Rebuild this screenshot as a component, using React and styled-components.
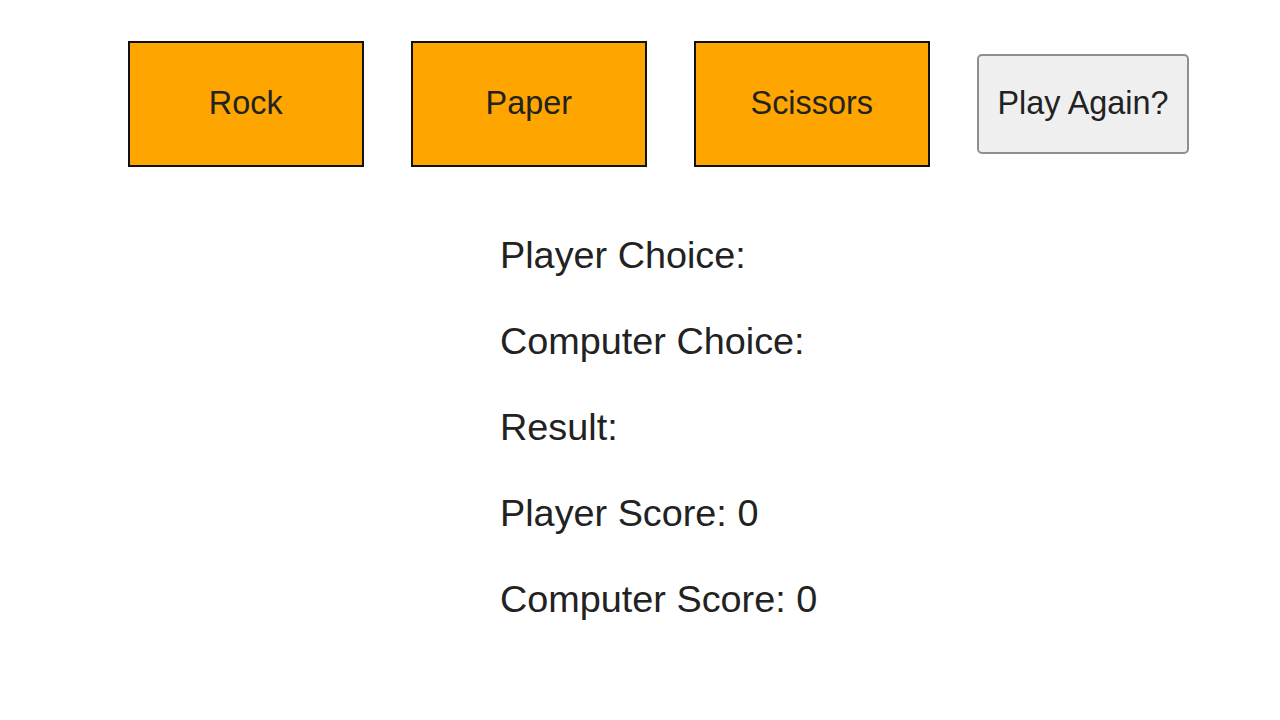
import React, { useState } from "react";
import styled, { createGlobalStyle } from "styled-components";

const GlobalStyle = createGlobalStyle`
  html, body {
    margin: 0;
    padding: 0;
    background: #ffffff;
    font-family: "Liberation Sans", Arial, sans-serif;
    color: #222;
  }
`;

const choices = ["Rock", "Paper", "Scissors"];

const App = () => {
  const [playerChoice, setPlayerChoice] = useState("");
  const [computerChoice, setComputerChoice] = useState("");
  const [result, setResult] = useState("");
  const [playerScore, setPlayerScore] = useState(0);
  const [computerScore, setComputerScore] = useState(0);

  const play = (choice) => {
    const comp = choices[Math.floor(Math.random() * 3)];
    setPlayerChoice(choice);
    setComputerChoice(comp);
    if (comp === choice) {
      setResult("Tie");
      return;
    }
    const wins =
      (choice === "Rock" && comp === "Scissors") ||
      (choice === "Paper" && comp === "Rock") ||
      (choice === "Scissors" && comp === "Paper");
    if (wins) {
      setResult("You win");
      setPlayerScore((s) => s + 1);
    } else {
      setResult("You lose");
      setComputerScore((s) => s + 1);
    }
  };

  const reset = () => {
    setPlayerChoice("");
    setComputerChoice("");
    setResult("");
    setPlayerScore(0);
    setComputerScore(0);
  };

  return (
    <>
      <GlobalStyle />
      <Container>
        <ButtonRow>
          {choices.map((c) => (
            <ChoiceButton key={c} onClick={() => play(c)}>
              {c}
            </ChoiceButton>
          ))}
          <ResetButton onClick={reset}>Play Again?</ResetButton>
        </ButtonRow>
        <Results>
          <Line>Player Choice: {playerChoice}</Line>
          <Line>Computer Choice: {computerChoice}</Line>
          <Line>Result: {result}</Line>
          <Line>Player Score: {playerScore}</Line>
          <Line>Computer Score: {computerScore}</Line>
        </Results>
      </Container>
    </>
  );
};

const Container = styled.div`
  width: 1280px;
  height: 720px;
  padding-top: 41px;
  box-sizing: border-box;
`;

const ButtonRow = styled.div`
  display: flex;
  align-items: center;
  gap: 47.5px;
  padding-left: 128px;
`;

const ChoiceButton = styled.button`
  width: 235.5px;
  height: 125.5px;
  background: #ffa500;
  border: 2px solid #111;
  border-radius: 0;
  font-family: "Liberation Sans", Arial, sans-serif;
  font-size: 32.4px;
  color: #222;
  cursor: pointer;
  padding: 0;
`;

const ResetButton = styled.button`
  width: 212px;
  height: 100px;
  background: #efefef;
  border: 2px solid #8f8f8f;
  border-radius: 5px;
  font-family: "Liberation Sans", Arial, sans-serif;
  font-size: 32.4px;
  color: #222;
  cursor: pointer;
  padding: 0;
`;

const Results = styled.div`
  margin-top: 45.5px;
  padding-left: 500px;
  display: flex;
  flex-direction: column;
`;

const Line = styled.div`
  font-size: 37.8px;
  line-height: 86px;
  color: #222;
`;

export default App;
